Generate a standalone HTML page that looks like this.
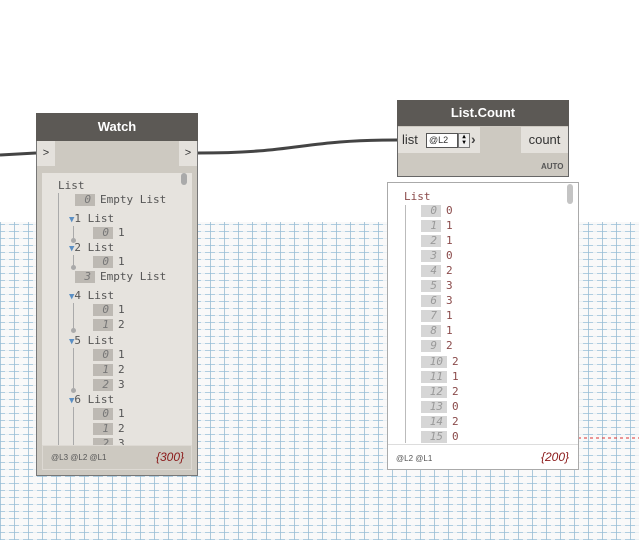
<!DOCTYPE html>
<html><head><style>
body{margin:0;width:639px;height:540px;overflow:hidden;background:#fff;position:relative;font-family:"DejaVu Sans Mono","Liberation Mono",monospace;}
.grid{position:absolute;left:0;top:222px;width:639px;height:318px;background-color:#f9f9f9;
background-image:repeating-linear-gradient(90deg,transparent 0 5px,rgba(249,249,249,.8) 5px 9px,transparent 9px 14px),repeating-linear-gradient(0deg,rgba(150,190,215,.75) 0 1px,transparent 1px 7px),repeating-linear-gradient(90deg,rgba(140,180,205,.7) 0 1px,transparent 1px 14px);}
.a{position:absolute}
.r{position:absolute;font-size:11px;color:#555;height:14px;line-height:14px;white-space:nowrap}
.i{display:inline-block;width:20px;background:#bdb9b3;color:#777;font-style:italic;text-align:right;padding-right:4px;box-sizing:border-box;margin-right:5px;height:12px;line-height:12px}
.p .i{background:#d6d6d6;color:#999}
.p .r{color:#8a4a4a}
.tri{color:#5b8fc4;font-size:9px}
.sans{font-family:"Liberation Sans",sans-serif}
</style></head><body>
<div class="grid"></div>
<svg class="a" style="left:0;top:0" width="639" height="540">
<path d="M0 155 L36 153" stroke="#444" stroke-width="3" fill="none"/>
<path d="M198 153 C300 153 300 140 397 140" stroke="#444" stroke-width="3" fill="none"/>
<line x1="578" y1="438" x2="639" y2="438" stroke="#d33" stroke-width="1" stroke-dasharray="3,3"/>
</svg>
<div class="a" style="left:36px;top:113px;width:162px;height:363px;background:#cdc9c1;border:1px solid #777;box-sizing:border-box"></div>
<div class="a sans" style="left:36px;top:113px;width:162px;height:28px;background:#5c5955;color:#fff;font-weight:bold;font-size:13px;text-align:center;line-height:28px">Watch</div>
<div class="a sans" style="left:37px;top:141px;width:18px;height:25px;background:#e4e1dc;font-size:11px;line-height:25px;text-align:center;color:#333">&gt;</div>
<div class="a sans" style="left:179px;top:141px;width:18px;height:25px;background:#e4e1dc;font-size:11px;line-height:25px;text-align:center;color:#333">&gt;</div>
<div class="a" style="left:42px;top:173px;width:150px;height:272px;background:#e6e3de"></div>
<div class="a" style="left:181px;top:173px;width:6px;height:12px;background:#aaa;border-radius:3px"></div>
<div class="a" style="left:58px;top:193px;width:1px;height:252px;background:#aaa"></div>
<div class="a" style="left:73px;top:226px;width:1px;height:14px;background:#aaa"></div>
<div class="a" style="left:71px;top:238px;width:5px;height:5px;border-radius:3px;background:#aaa"></div>
<div class="a" style="left:73px;top:255px;width:1px;height:12px;background:#aaa"></div>
<div class="a" style="left:71px;top:265px;width:5px;height:5px;border-radius:3px;background:#aaa"></div>
<div class="a" style="left:73px;top:303px;width:1px;height:26px;background:#aaa"></div>
<div class="a" style="left:71px;top:328px;width:5px;height:5px;border-radius:3px;background:#aaa"></div>
<div class="a" style="left:73px;top:348px;width:1px;height:41px;background:#aaa"></div>
<div class="a" style="left:71px;top:388px;width:5px;height:5px;border-radius:3px;background:#aaa"></div>
<div class="a" style="left:73px;top:407px;width:1px;height:38px;background:#aaa"></div>
<div class="w">
<div class="r" style="left:58px;top:179px">List</div>
<div class="r" style="left:75px;top:193px"><span class="i">0</span>Empty List</div>
<div class="r" style="left:69px;top:212px"><span class="tri">▼</span>1 List</div>
<div class="r" style="left:93px;top:226px"><span class="i">0</span>1</div>
<div class="r" style="left:69px;top:241px"><span class="tri">▼</span>2 List</div>
<div class="r" style="left:93px;top:255px"><span class="i">0</span>1</div>
<div class="r" style="left:75px;top:270px"><span class="i">3</span>Empty List</div>
<div class="r" style="left:69px;top:289px"><span class="tri">▼</span>4 List</div>
<div class="r" style="left:93px;top:303px"><span class="i">0</span>1</div>
<div class="r" style="left:93px;top:318px"><span class="i">1</span>2</div>
<div class="r" style="left:69px;top:334px"><span class="tri">▼</span>5 List</div>
<div class="r" style="left:93px;top:348px"><span class="i">0</span>1</div>
<div class="r" style="left:93px;top:363px"><span class="i">1</span>2</div>
<div class="r" style="left:93px;top:378px"><span class="i">2</span>3</div>
<div class="r" style="left:69px;top:393px"><span class="tri">▼</span>6 List</div>
<div class="r" style="left:93px;top:407px"><span class="i">0</span>1</div>
<div class="r" style="left:93px;top:422px"><span class="i">1</span>2</div>
<div class="r" style="left:93px;top:437px;height:8px;overflow:hidden"><span class="i">2</span>3</div>
</div>
<div class="a" style="left:42px;top:445px;width:150px;height:25px;border:1px solid #ddd9d3;box-sizing:border-box;background:#cdc9c1"></div>
<div class="a sans" style="left:51px;top:453px;font-size:8px;color:#555">@L3 @L2 @L1</div>
<div class="a sans" style="left:156px;top:450px;font-size:12px;color:#8b1a1a;font-style:italic">{300}</div>
<div class="a" style="left:397px;top:100px;width:172px;height:77px;background:#cdc9c1;border:1px solid #666;box-sizing:border-box"></div>
<div class="a sans" style="left:397px;top:100px;width:172px;height:26px;background:#5c5955;color:#fff;font-weight:bold;font-size:13px;text-align:center;line-height:26px">List.Count</div>
<div class="a sans" style="left:398px;top:127px;width:82px;height:26px;background:#e4e1dc;font-size:13px;line-height:26px;color:#333;padding-left:4px;box-sizing:border-box">list</div>
<div class="a" style="left:426px;top:133px;width:32px;height:15px;background:#fff;border:1px solid #555;box-sizing:border-box;font-family:'Liberation Sans',sans-serif;font-size:9px;line-height:13px;padding-left:2px;color:#333">@L2</div>
<div class="a" style="left:458px;top:133px;width:12px;height:15px;background:#eee;border:1px solid #777;box-sizing:border-box;font-size:6px;line-height:6px;text-align:center">▲<br>▼</div>
<div class="a sans" style="left:471px;top:131px;font-size:14px;font-weight:bold;color:#444">›</div>
<div class="a sans" style="left:521px;top:127px;width:47px;height:26px;background:#e4e1dc;font-size:13px;line-height:26px;color:#333;text-align:center">count</div>
<div class="a sans" style="left:541px;top:162px;font-size:8px;font-weight:bold;color:#555">AUTO</div>
<div class="a" style="left:387px;top:182px;width:192px;height:288px;background:#fff;border:1px solid #aaa;box-sizing:border-box"></div>
<div class="a" style="left:567px;top:184px;width:6px;height:20px;background:#c4c4c4;border-radius:3px"></div>
<div class="a" style="left:405px;top:205px;width:1px;height:238px;background:#bbb"></div>
<div class="p">
<div class="r" style="left:404px;top:190px">List</div>
<div class="r" style="left:421px;top:204px"><span class="i">0</span>0</div>
<div class="r" style="left:421px;top:219px"><span class="i">1</span>1</div>
<div class="r" style="left:421px;top:234px"><span class="i">2</span>1</div>
<div class="r" style="left:421px;top:249px"><span class="i">3</span>0</div>
<div class="r" style="left:421px;top:264px"><span class="i">4</span>2</div>
<div class="r" style="left:421px;top:279px"><span class="i">5</span>3</div>
<div class="r" style="left:421px;top:294px"><span class="i">6</span>3</div>
<div class="r" style="left:421px;top:309px"><span class="i">7</span>1</div>
<div class="r" style="left:421px;top:324px"><span class="i">8</span>1</div>
<div class="r" style="left:421px;top:339px"><span class="i">9</span>2</div>
<div class="r" style="left:421px;top:355px"><span class="i" style="width:26px">10</span>2</div>
<div class="r" style="left:421px;top:370px"><span class="i" style="width:26px">11</span>1</div>
<div class="r" style="left:421px;top:385px"><span class="i" style="width:26px">12</span>2</div>
<div class="r" style="left:421px;top:400px"><span class="i" style="width:26px">13</span>0</div>
<div class="r" style="left:421px;top:415px"><span class="i" style="width:26px">14</span>2</div>
<div class="r" style="left:421px;top:430px"><span class="i" style="width:26px">15</span>0</div>
</div>
<div class="a" style="left:388px;top:444px;width:190px;height:1px;background:#ddd"></div>
<div class="a sans" style="left:396px;top:454px;font-size:8px;color:#555">@L2 @L1</div>
<div class="a sans" style="left:541px;top:450px;font-size:12px;color:#8b1a1a;font-style:italic">{200}</div>
</body></html>
